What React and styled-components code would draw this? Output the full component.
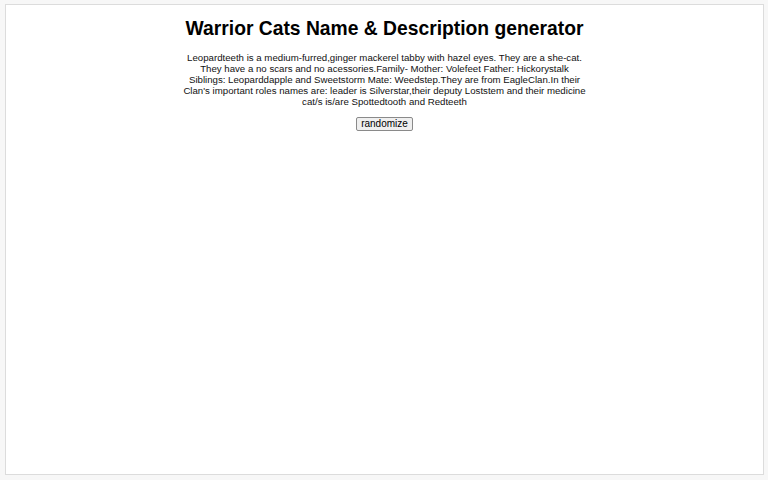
import React, { useState } from "react";
import styled, { createGlobalStyle } from "styled-components";

const GlobalStyle = createGlobalStyle`
  html, body {
    margin: 0;
    padding: 0;
    background: #f7f7f7;
  }
  body {
    font-family: "Liberation Sans", Arial, sans-serif;
    padding: 4px 4px 4px 5px;
  }
`;

const Panel = styled.div`
  box-sizing: border-box;
  height: 471px;
  background: #fff;
  border: 1px solid #dcdcdc;
  display: flex;
  flex-direction: column;
  align-items: center;
  padding-top: 13px;
`;

const Title = styled.h1`
  margin: 0;
  font-size: 19.3px;
  font-weight: bold;
  color: #000;
  line-height: 22px;
`;

const Description = styled.p`
  margin: 12px 0 0;
  width: 406px;
  font-size: 9.66px;
  line-height: 11px;
  text-align: center;
  color: #111;
`;

const Button = styled.button`
  margin-top: 10px;
  font-family: "Liberation Sans", Arial, sans-serif;
  font-size: 10px;
  line-height: 12px;
  padding: 0 4px;
  background: #efefef;
  border: 1px solid #8a8a8a;
  border-radius: 2px;
  color: #000;
`;

const text =
  "Leopardteeth is a medium-furred,ginger mackerel tabby with hazel eyes. They are a she-cat. They have a no scars and no acessories.Family- Mother: Volefeet Father: Hickorystalk Siblings: Leoparddapple and Sweetstorm Mate: Weedstep.They are from EagleClan.In their Clan's important roles names are: leader is Silverstar,their deputy Loststem and their medicine cat/s is/are Spottedtooth and Redteeth";

export default function App() {
  const [desc] = useState(text);
  return (
    <>
      <GlobalStyle />
      <Panel>
        <Title>Warrior Cats Name &amp; Description generator</Title>
        <Description>{desc}</Description>
        <Button>randomize</Button>
      </Panel>
    </>
  );
}
